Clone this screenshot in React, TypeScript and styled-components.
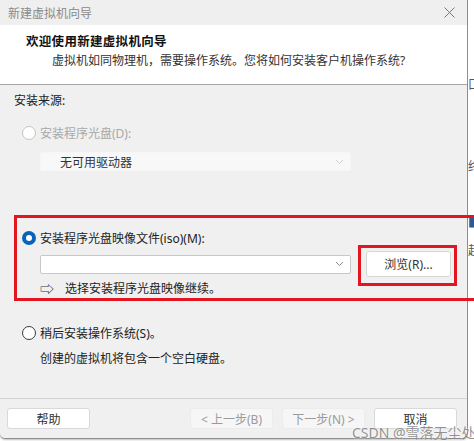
import React from "react";
import styled, { createGlobalStyle } from "styled-components";

const Global = createGlobalStyle`
  html, body { margin: 0; padding: 0; background: #ffffff; }
  body { font-family: "Noto Sans", "Noto Sans CJK SC", sans-serif; font-size: 12px; }
  * { box-sizing: border-box; }
`;

const Page = styled.div`
  width: 474px;
  height: 441px;
  display: flex;
  position: relative;
  overflow: hidden;
  background: #ffffff;
`;

const Dialog = styled.div`
  width: 468px;
  height: 439px;
  flex: none;
  background: #f0f0f0;
  border-right: 1px solid #8e8e8e;
  border-bottom: 1px solid #8e8e8e;
  border-bottom-right-radius: 5px;
  border-bottom-left-radius: 5px;
  box-shadow: 0 1px 2px rgba(0, 0, 0, 0.25);
  display: flex;
  flex-direction: column;
`;

const TitleBar = styled.div`
  height: 25px;
  flex: none;
  display: flex;
  align-items: center;
  justify-content: space-between;
  padding: 0 12px 0 8px;
  color: #8a8a8a;
  font-size: 12px;
  background: #efefef;
`;

const Header = styled.div`
  height: 60px;
  flex: none;
  background: #ffffff;
  border-bottom: 1px solid #a8a8a8;
  padding: 9px 0 0 26px;
  display: flex;
  flex-direction: column;
  gap: 3px;
`;

const HeaderTitle = styled.div`
  font-weight: 700;
  font-size: 12.5px;
  line-height: 16px;
  color: #111;
  letter-spacing: 0.3px;
`;

const HeaderSub = styled.div`
  font-size: 12px;
  line-height: 16px;
  color: #333;
  padding-left: 26px;
`;

const Body = styled.div`
  flex: 1;
  display: flex;
  flex-direction: column;
  padding: 8px 14px 0 14px;
`;

const Label = styled.div<{ $dim?: boolean; $indent?: number; $mt?: number }>`
  font-size: 12px;
  line-height: 16px;
  color: ${(p) => (p.$dim ? "#a8a8a8" : "#222")};
  padding-left: ${(p) => p.$indent ?? 0}px;
  margin-top: ${(p) => p.$mt ?? 0}px;
  display: flex;
  align-items: center;
  gap: 11px;
`;

const RadioRow = styled.div<{ $mt: number; $dim?: boolean }>`
  display: flex;
  align-items: center;
  gap: 4px;
  height: 16px;
  margin-top: ${(p) => p.$mt}px;
  padding-left: 8px;
  color: ${(p) => (p.$dim ? "#a8a8a8" : "#222")};
  font-size: 12px;
`;

const Radio = styled.span<{ $checked?: boolean; $dim?: boolean }>`
  width: 14px;
  height: 14px;
  border-radius: 50%;
  flex: none;
  background: #fff;
  border: ${(p) =>
    p.$checked ? "4px solid #0a63b8" : p.$dim ? "1px solid #c4c4c4" : "1px solid #3a3a3a"};
`;

const Combo = styled.div<{ $disabled?: boolean; $mt?: number }>`
  width: 311px;
  height: 19px;
  margin-left: 26px;
  margin-top: ${(p) => p.$mt ?? 0}px;
  background: ${(p) => (p.$disabled ? "#f8f8f8" : "#ffffff")};
  border: 1px solid ${(p) => (p.$disabled ? "#f6f6f6" : "#c8c8c8")};
  border-radius: 2px;
  display: flex;
  align-items: center;
  justify-content: space-between;
  padding: 0 6px 0 19px;
  color: #333;
  font-size: 12px;
  flex: none;
`;

const IsoRow = styled.div`
  display: flex;
  align-items: center;
  margin-top: 5px;
  height: 26px;
  gap: 0;
`;

const BrowseButton = styled.div`
  width: 85px;
  height: 26px;
  margin-left: 15px;
  background: #ffffff;
  border: 1px solid #d6d6d6;
  border-radius: 3px;
  display: flex;
  align-items: center;
  justify-content: center;
  color: #333;
  font-size: 12px;
`;

const Arrow = styled.span`
  font-size: 14px;
  color: #333;
  line-height: 16px;
`;

const Footer = styled.div`
  height: 40px;
  flex: none;
  border-top: 1px solid #d4d4d4;
  display: flex;
  align-items: flex-start;
  padding: 9px 10px 0 7px;
  gap: 9px;
`;

const Btn = styled.div<{ $disabled?: boolean }>`
  width: 83px;
  height: 21px;
  border-radius: 3px;
  background: ${(p) => (p.$disabled ? "#f6f6f6" : "#ffffff")};
  border: 1px solid ${(p) => (p.$disabled ? "#ececec" : "#d9d9d9")};
  color: ${(p) => (p.$disabled ? "#9a9a9a" : "#333")};
  display: flex;
  align-items: center;
  justify-content: center;
  font-size: 12px;
`;

const Spacer = styled.div`
  flex: 1;
`;

const Strip = styled.div`
  flex: 1;
  position: relative;
  overflow: hidden;
  background: #ffffff;
`;

const Fragment = styled.span<{ $top: number; $color?: string }>`
  position: absolute;
  left: 0px;
  top: ${(p) => p.$top}px;
  font-size: 12px;
  line-height: 14px;
  color: ${(p) => p.$color ?? "#555"};
`;

const RedBox = styled.div<{ $l: number; $t: number; $w: number; $h: number }>`
  position: absolute;
  left: ${(p) => p.$l}px;
  top: ${(p) => p.$t}px;
  width: ${(p) => p.$w}px;
  height: ${(p) => p.$h}px;
  border: 3px solid #e3161f;
  pointer-events: none;
`;

const Watermark = styled.div`
  position: absolute;
  left: 352px;
  top: 424px;
  font-size: 14px;
  line-height: 18px;
  color: rgba(110, 110, 110, 0.75);
  text-shadow: 0 0 2px #ffffff;
  white-space: nowrap;
`;

const Chevron = ({ light }: { light?: boolean }) => (
  <svg width="9" height="6" viewBox="0 0 9 6">
    <path
      d="M1 1 L4.5 4.5 L8 1"
      fill="none"
      stroke={light ? "#cfcfcf" : "#8a8a8a"}
      strokeWidth="1"
    />
  </svg>
);

const CloseIcon = () => (
  <svg width="11" height="11" viewBox="0 0 11 11">
    <path d="M0.5 0.5 L10.5 10.5 M10.5 0.5 L0.5 10.5" stroke="#777" strokeWidth="1" />
  </svg>
);

export default function App() {
  return (
    <>
      <Global />
      <Page>
        <Dialog>
          <TitleBar>
            <span>新建虚拟机向导</span>
            <CloseIcon />
          </TitleBar>
          <Header>
            <HeaderTitle>欢迎使用新建虚拟机向导</HeaderTitle>
            <HeaderSub>虚拟机如同物理机，需要操作系统。您将如何安装客户机操作系统?</HeaderSub>
          </Header>
          <Body>
            <Label>安装来源:</Label>
            <RadioRow $mt={16} $dim>
              <Radio $dim />
              <span>安装程序光盘(D):</span>
            </RadioRow>
            <Combo $disabled $mt={11}>
              <span>无可用驱动器</span>
              <Chevron light />
            </Combo>
            <RadioRow $mt={59}>
              <Radio $checked />
              <span>安装程序光盘映像文件(iso)(M):</span>
            </RadioRow>
            <IsoRow>
              <Combo>
                <span />
                <Chevron />
              </Combo>
              <BrowseButton>浏览(R)...</BrowseButton>
            </IsoRow>
            <Label $indent={26} $mt={4}>
              <Arrow>⇨</Arrow>
              <span>选择安装程序光盘映像继续。</span>
            </Label>
            <RadioRow $mt={28}>
              <Radio />
              <span>稍后安装操作系统(S)。</span>
            </RadioRow>
            <Label $indent={26} $mt={10}>创建的虚拟机将包含一个空白硬盘。</Label>
          </Body>
          <Footer>
            <Btn>帮助</Btn>
            <Spacer />
            <Btn $disabled>&lt; 上一步(B)</Btn>
            <Btn $disabled>下一步(N) &gt;</Btn>
            <Btn>取消</Btn>
          </Footer>
        </Dialog>
        <Strip>
          <Fragment $top={78}>口</Fragment>
          <Fragment $top={160}>终</Fragment>
          <Fragment $top={217} $color="#2a5a9a">■</Fragment>
          <Fragment $top={244}>起</Fragment>
        </Strip>
        <RedBox $l={14} $t={215} $w={470} $h={86} />
        <RedBox $l={358} $t={245} $w={99} $h={41} />
        <Watermark>CSDN @雪落无尘处</Watermark>
      </Page>
    </>
  );
}
